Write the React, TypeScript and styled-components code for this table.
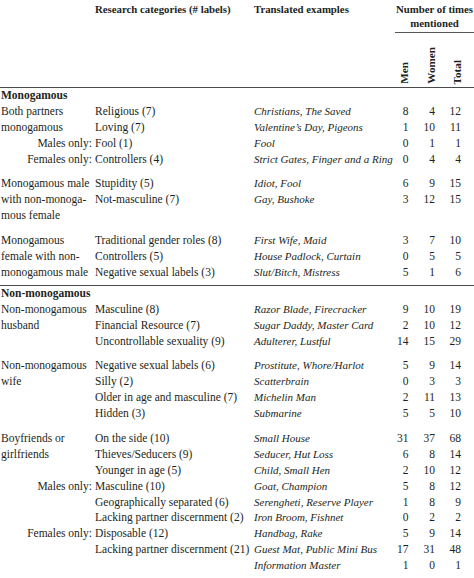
import React from "react";
import styled, { createGlobalStyle } from "styled-components";

type Counts = [number, number, number];
type Row = { lead?: string; sub?: boolean; cat?: string; ex?: string; n?: Counts };
type Section = { title: string; groups: Row[][] };

const sections: Section[] = [
  {
    title: "Monogamous",
    groups: [
      [
        { lead: "Both partners", cat: "Religious (7)", ex: "Christians, The Saved", n: [8, 4, 12] },
        { lead: "monogamous", cat: "Loving (7)", ex: "Valentine’s Day, Pigeons", n: [1, 10, 11] },
        { lead: "Males only:", sub: true, cat: "Fool (1)", ex: "Fool", n: [0, 1, 1] },
        { lead: "Females only:", sub: true, cat: "Controllers (4)", ex: "Strict Gates, Finger and a Ring", n: [0, 4, 4] },
      ],
      [
        { lead: "Monogamous male", cat: "Stupidity (5)", ex: "Idiot, Fool", n: [6, 9, 15] },
        { lead: "with non-monoga-", cat: "Not-masculine (7)", ex: "Gay, Bushoke", n: [3, 12, 15] },
        { lead: "mous female" },
      ],
      [
        { lead: "Monogamous", cat: "Traditional gender roles (8)", ex: "First Wife, Maid", n: [3, 7, 10] },
        { lead: "female with non-", cat: "Controllers (5)", ex: "House Padlock, Curtain", n: [0, 5, 5] },
        { lead: "monogamous male", cat: "Negative sexual labels (3)", ex: "Slut/Bitch, Mistress", n: [5, 1, 6] },
      ],
    ],
  },
  {
    title: "Non-monogamous",
    groups: [
      [
        { lead: "Non-monogamous", cat: "Masculine (8)", ex: "Razor Blade, Firecracker", n: [9, 10, 19] },
        { lead: "husband", cat: "Financial Resource (7)", ex: "Sugar Daddy, Master Card", n: [2, 10, 12] },
        { cat: "Uncontrollable sexuality (9)", ex: "Adulterer, Lustful", n: [14, 15, 29] },
      ],
      [
        { lead: "Non-monogamous", cat: "Negative sexual labels (6)", ex: "Prostitute, Whore/Harlot", n: [5, 9, 14] },
        { lead: "wife", cat: "Silly (2)", ex: "Scatterbrain", n: [0, 3, 3] },
        { cat: "Older in age and masculine (7)", ex: "Michelin Man", n: [2, 11, 13] },
        { cat: "Hidden (3)", ex: "Submarine", n: [5, 5, 10] },
      ],
      [
        { lead: "Boyfriends or", cat: "On the side (10)", ex: "Small House", n: [31, 37, 68] },
        { lead: "girlfriends", cat: "Thieves/Seducers (9)", ex: "Seducer, Hut Loss", n: [6, 8, 14] },
        { cat: "Younger in age (5)", ex: "Child, Small Hen", n: [2, 10, 12] },
        { lead: "Males only:", sub: true, cat: "Masculine (10)", ex: "Goat, Champion", n: [5, 8, 12] },
        { cat: "Geographically separated (6)", ex: "Serengheti, Reserve Player", n: [1, 8, 9] },
        { cat: "Lacking partner discernment (2)", ex: "Iron Broom, Fishnet", n: [0, 2, 2] },
        { lead: "Females only:", sub: true, cat: "Disposable (12)", ex: "Handbag, Rake", n: [5, 9, 14] },
        { cat: "Lacking partner discernment (21)", ex: "Guest Mat, Public Mini Bus", n: [17, 31, 48] },
        { ex: "Information Master", n: [1, 0, 1] },
      ],
    ],
  },
];

const columns = "95px 159px 141px 26.5px 26.5px 26px";
const ink = "#231f20";

const GlobalStyle = createGlobalStyle`
  html, body {
    margin: 0;
    padding: 0;
    background: #ffffff;
    overflow: hidden;
  }
  body {
    font-family: "Liberation Serif", "Times New Roman", serif;
    color: ${ink};
  }
`;

const Page = styled.div`
  width: 474px;
  height: 578px;
  overflow: hidden;
  background: #ffffff;
`;

const Head = styled.div`
  display: grid;
  grid-template-columns: ${columns};
  height: 87px;
  padding-top: 2px;
  box-sizing: border-box;
`;

const HeadCell = styled.div<{ $col: number }>`
  grid-column: ${(p) => p.$col};
  font-size: 10.8px;
  font-weight: bold;
  line-height: 15.8px;
  white-space: nowrap;
`;

const CountHead = styled.div`
  grid-column: 4 / span 3;
  display: grid;
  grid-template-columns: 26.5px 26.5px 26px;
  grid-template-rows: auto 1fr;
`;

const CountTitle = styled.div`
  grid-column: 1 / span 3;
  font-size: 10.8px;
  font-weight: bold;
  line-height: 14px;
  text-align: center;
  white-space: nowrap;
  padding-bottom: 2px;
  border-bottom: 1px solid #555;
`;

const Rotated = styled.div`
  display: flex;
  align-items: flex-end;
  justify-content: center;
  padding: 0 8px 3px 0;
  span {
    writing-mode: vertical-rl;
    transform: rotate(180deg);
    font-size: 11.2px;
    font-weight: bold;
    line-height: 12px;
  }
`;

const Rule = styled.div`
  height: 1px;
  background: #4a4a4a;
`;

const SectionTitle = styled.div`
  font-size: 11.5px;
  font-weight: bold;
  line-height: 15.9px;
  padding-left: 1px;
`;

const Group = styled.div<{ $gap: number }>`
  display: grid;
  grid-template-columns: ${columns};
  grid-auto-rows: 15.9px;
  margin-top: ${(p) => p.$gap}px;
  font-size: 11.5px;
  line-height: 15.9px;
  white-space: nowrap;
`;

const Lead = styled.div<{ $sub?: boolean }>`
  grid-column: 1;
  text-align: ${(p) => (p.$sub ? "right" : "left")};
  padding: ${(p) => (p.$sub ? "0 3px 0 0" : "0 0 0 1px")};
`;

const Category = styled.div`
  grid-column: 2;
`;

const Example = styled.div`
  grid-column: 3;
  font-style: italic;
  font-size: 11px;
`;

const Count = styled.div`
  text-align: right;
  padding-right: 13px;
`;

const SectionEnd = styled.div`
  height: 4px;
`;

function GroupRows({ rows, gap }: { rows: Row[]; gap: number }) {
  return (
    <Group $gap={gap}>
      {rows.map((r, i) => (
        <React.Fragment key={i}>
          <Lead $sub={r.sub}>{r.lead}</Lead>
          <Category>{r.cat}</Category>
          <Example>{r.ex}</Example>
          {r.n ? r.n.map((v, j) => <Count key={j}>{v}</Count>) : null}
        </React.Fragment>
      ))}
    </Group>
  );
}

export default function App() {
  return (
    <Page>
      <GlobalStyle />
      <Head>
        <HeadCell $col={2}>Research categories (# labels)</HeadCell>
        <HeadCell $col={3}>Translated examples</HeadCell>
        <CountHead>
          <CountTitle>
            Number of times
            <br />
            mentioned
          </CountTitle>
          {["Men", "Women", "Total"].map((t) => (
            <Rotated key={t}>
              <span>{t}</span>
            </Rotated>
          ))}
        </CountHead>
      </Head>
      {sections.map((s, si) => (
        <React.Fragment key={s.title}>
          <Rule />
          <SectionTitle>{s.title}</SectionTitle>
          {s.groups.map((g, gi) => (
            <GroupRows key={gi} rows={g} gap={gi === 0 ? 0 : 9} />
          ))}
          {si === 0 ? <SectionEnd /> : null}
        </React.Fragment>
      ))}
    </Page>
  );
}
